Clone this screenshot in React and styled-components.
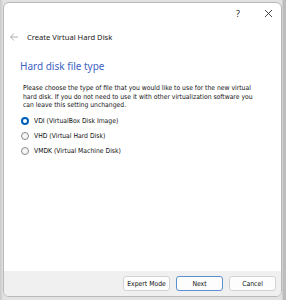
import React from "react";
import styled, { createGlobalStyle } from "styled-components";

const Global = createGlobalStyle`
  html, body { margin: 0; padding: 0; }
  body {
    width: 286px;
    height: 300px;
    overflow: hidden;
    background: #cfcfcf;
    font-family: "Noto Sans", "Open Sans", sans-serif;
  }
`;

const Backdrop = styled.div`
  width: 286px;
  height: 300px;
  padding: 2px 4px 3px 3px;
  box-sizing: border-box;
  background: linear-gradient(90deg, #c8c8c8 0, #e2e2e2 3px, #e2e2e2 282px, #bdbdbd 283px);
`;

const Dialog = styled.div`
  height: 100%;
  display: flex;
  flex-direction: column;
  background: #fff;
  border: 1px solid #b9b9b9;
  border-radius: 6px;
  overflow: hidden;
  box-sizing: border-box;
`;

const TitleBar = styled.div`
  height: 20px;
  display: flex;
  justify-content: flex-end;
  align-items: center;
  gap: 14px;
  padding-right: 5px;
`;

const TitleIcon = styled.span`
  width: 16px;
  display: flex;
  justify-content: center;
  font-size: 9px;
  color: #222;
`;

const Header = styled.div`
  display: flex;
  align-items: center;
  gap: 8px;
  padding: 6px 0 0 5px;
  height: 16px;
  font-size: 7.6px;
  color: #1a1a1a;
`;

const Body = styled.div`
  flex: 1;
  padding: 14px 16px 0 16px;
`;

const Heading = styled.h2`
  margin: 0;
  font-family: "Noto Sans", sans-serif;
  font-weight: 400;
  font-size: 10px;
  line-height: 15px;
  color: #3d63c4;
`;

const Para = styled.p`
  margin: 10px 0 0 3px;
  font-family: "DejaVu Sans Condensed", "DejaVu Sans", sans-serif;
  font-size: 6.75px;
  line-height: 8.7px;
  color: #111;
  white-space: nowrap;
`;

const Options = styled.div`
  margin: 6px 0 0 1px;
  display: flex;
  flex-direction: column;
  gap: 5px;
`;

const Option = styled.label`
  display: flex;
  align-items: center;
  gap: 5px;
  height: 10px;
  font-family: "DejaVu Sans Condensed", "DejaVu Sans", sans-serif;
  font-size: 6.75px;
  color: #111;
`;

const Radio = styled.span`
  width: 8px;
  height: 8px;
  border-radius: 50%;
  box-sizing: border-box;
  border: ${(p) => (p.$on ? "2.5px solid #005fb8" : "1px solid #8a8a8a")};
  background: ${(p) => (p.$on ? "#fff" : "#f6f6f6")};
`;

const Footer = styled.div`
  height: 25px;
  background: #f0f0f0;
  display: flex;
  justify-content: flex-end;
  align-items: center;
  gap: 6px;
  padding-right: 5px;
`;

const Button = styled.button`
  width: 47px;
  height: 15px;
  padding: 0;
  background: #fdfdfd;
  border: 1px solid ${(p) => (p.$primary ? "#5c8fd1" : "#d2d2d2")};
  border-radius: 3px;
  font-family: "DejaVu Sans Condensed", "DejaVu Sans", sans-serif;
  font-size: 6.8px;
  color: #111;
`;

const Back = () => (
  <svg width="10" height="10" viewBox="0 0 10 10">
    <path d="M9 5H1.5M5 1.5L1.5 5L5 8.5" fill="none" stroke="#9a9a9a" strokeWidth="0.8" />
  </svg>
);

const Close = () => (
  <svg width="9" height="9" viewBox="0 0 9 9">
    <path d="M1 1L8 8M8 1L1 8" stroke="#333" strokeWidth="0.9" />
  </svg>
);

export default function App() {
  return (
    <>
      <Global />
      <Backdrop>
        <Dialog>
          <TitleBar>
            <TitleIcon>?</TitleIcon>
            <TitleIcon>
              <Close />
            </TitleIcon>
          </TitleBar>
          <Header>
            <Back />
            Create Virtual Hard Disk
          </Header>
          <Body>
            <Heading>Hard disk file type</Heading>
            <Para>
              Please choose the type of file that you would like to use for the new virtual
              <br />
              hard disk. If you do not need to use it with other virtualization software you
              <br />
              can leave this setting unchanged.
            </Para>
            <Options>
              <Option>
                <Radio $on />
                VDI (VirtualBox Disk Image)
              </Option>
              <Option>
                <Radio />
                VHD (Virtual Hard Disk)
              </Option>
              <Option>
                <Radio />
                VMDK (Virtual Machine Disk)
              </Option>
            </Options>
          </Body>
          <Footer>
            <Button>Expert Mode</Button>
            <Button $primary>Next</Button>
            <Button>Cancel</Button>
          </Footer>
        </Dialog>
      </Backdrop>
    </>
  );
}
